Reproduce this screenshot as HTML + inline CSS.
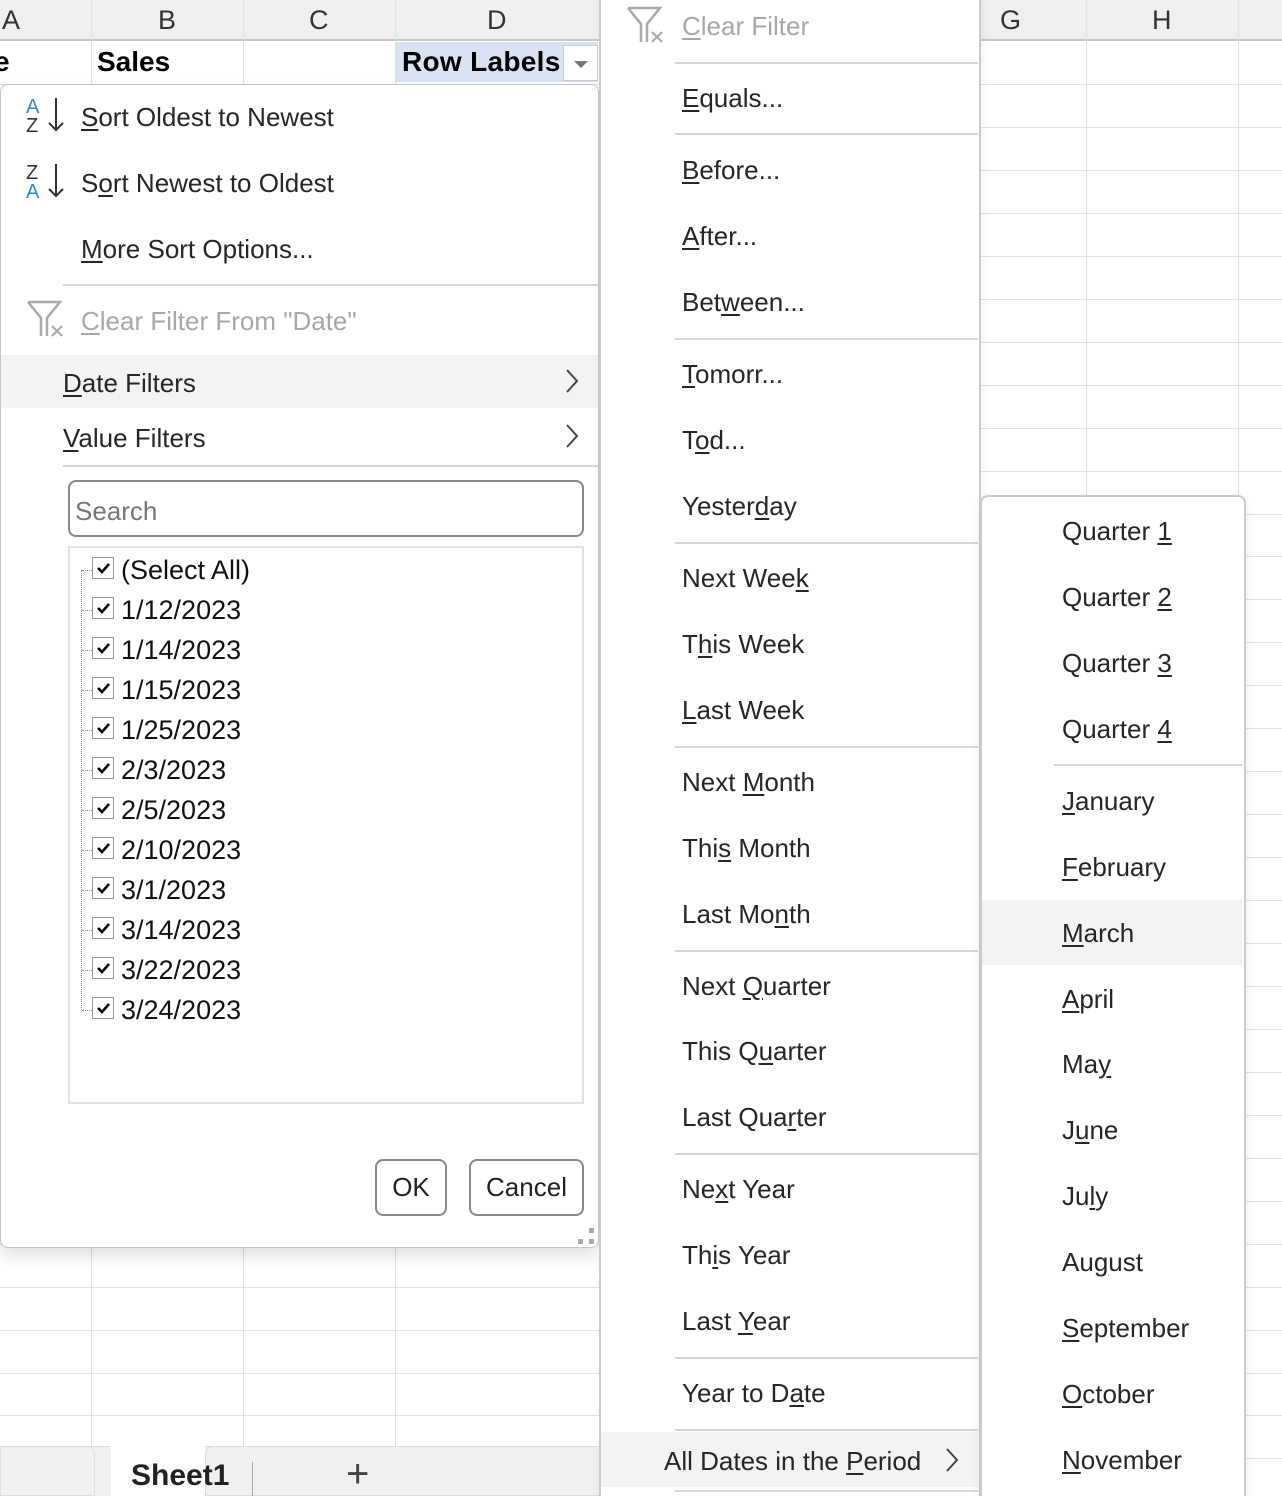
<!DOCTYPE html>
<html style="overflow:hidden;width:1282px;height:1496px"><head><meta charset="utf-8"><style>
*{margin:0;padding:0;box-sizing:border-box}
body{width:1282px;height:1496px;position:relative;overflow:hidden;background:#fff;font-family:"Segoe UI","Liberation Sans",sans-serif;color:#222;}
.a{position:absolute}
.t{position:absolute;font-size:26px;line-height:36px;height:36px;white-space:nowrap;color:#262626}
.sep{position:absolute;height:2px;background:#d6d6d6}
.vl{position:absolute;top:0;width:1px;height:1496px;background:#e1e1e1}
.hd{position:absolute;top:2px;font-size:27px;color:#333;line-height:36px}
u{text-decoration:underline;text-underline-offset:3px}
.cb{position:absolute;left:92px;width:22px;height:22px;border:1px solid #999;background:#fff}
.cb svg{position:absolute;left:4px;top:5px}
.ci{position:absolute;left:121px;font-size:27px;line-height:36px;color:#111}
</style></head><body>
<div class="a" style="left:0;top:0;width:1282px;height:41px;background:#efefef;border-bottom:2px solid #c8c8c8"></div>
<div id="grid"></div>
<div class="vl" style="left:91px"></div><div class="vl" style="left:243px"></div><div class="vl" style="left:395px"></div>
<div class="vl" style="left:1086px"></div><div class="vl" style="left:1238px"></div>
<div class="hd" style="left:2px">A</div><div class="hd" style="left:158px">B</div><div class="hd" style="left:309px">C</div><div class="hd" style="left:487px">D</div>
<div class="hd" style="left:1000px">G</div><div class="hd" style="left:1152px">H</div>
<div class="a" style="left:396px;top:42px;width:202px;height:40px;background:#dae3f3"></div>
<div class="a" style="left:-6px;top:42px;font-size:28px;font-weight:bold;line-height:40px;color:#000">e</div>
<div class="a" style="left:97px;top:42px;font-size:28px;font-weight:bold;line-height:40px;color:#000">Sales</div>
<div class="a" style="left:402px;top:42px;font-size:28px;font-weight:bold;line-height:40px;color:#000;letter-spacing:0.3px">Row Labels</div>
<div class="a" style="left:563px;top:45px;width:35px;height:36px;background:#fff;border:1px solid #ccc"></div>
<div class="a" style="left:574px;top:61px;width:0;height:0;border-left:7px solid transparent;border-right:7px solid transparent;border-top:7px solid #777"></div>

<div class="a" style="left:0;top:1446px;width:600px;height:50px;background:#f0f0f0;border-top:1px solid #ddd"></div>
<div class="a" style="left:0;top:1446px;width:95px;height:50px;background:#f0f0f0;border:1px solid #ddd;border-radius:0 8px 0 0"></div>
<div class="a" style="left:111px;top:1446px;width:94px;height:50px;background:#fff"></div>
<div class="a" style="left:205px;top:1446px;width:395px;height:50px;background:#f0f0f0;border:1px solid #ddd;border-radius:8px 0 0 0"></div>
<div class="a" style="left:131px;top:1456px;font-size:30px;font-weight:bold;color:#222;line-height:40px">Sheet1</div>
<div class="a" style="left:252px;top:1462px;width:1px;height:34px;background:#aaa"></div>
<div class="a" style="left:346px;top:1452px;font-size:40px;font-weight:200;color:#444">+</div>

<div class="a" style="left:0;top:84px;width:599px;height:1164px;background:#fff;border:1px solid #c6c6c6;border-radius:8px;box-shadow:0 8px 16px rgba(0,0,0,.12)"></div>
<svg class="a" style="left:24px;top:96px" width="44" height="40"><text x="2" y="17" font-size="20" fill="#2b88d8" font-family="Liberation Sans">A</text><text x="2" y="36" font-size="20" fill="#333" font-family="Liberation Sans">Z</text><path d="M32 2V34M25 27l7 7 7-7" stroke="#333" stroke-width="2" fill="none"/></svg>
<svg class="a" style="left:24px;top:162px" width="44" height="40"><text x="2" y="17" font-size="20" fill="#333" font-family="Liberation Sans">Z</text><text x="2" y="36" font-size="20" fill="#2b88d8" font-family="Liberation Sans">A</text><path d="M32 2V34M25 27l7 7 7-7" stroke="#333" stroke-width="2" fill="none"/></svg>
<div class="t" style="left:81px;top:99px"><u>S</u>ort Oldest to Newest</div>
<div class="t" style="left:81px;top:165px">S<u>o</u>rt Newest to Oldest</div>
<div class="t" style="left:81px;top:231px"><u>M</u>ore Sort Options...</div>
<div class="sep" style="left:63px;top:284px;width:535px"></div>
<svg class="a" style="left:26px;top:300px" width="40" height="40"><path d="M2 2H34L21 18V36M2 2L15 18V36" stroke="#aaa" stroke-width="2.5" fill="none"/><path d="M26 26l10 10M36 26l-10 10" stroke="#aaa" stroke-width="2"/></svg>
<div class="t" style="left:81px;top:303px;color:#a8a8a8"><u>C</u>lear Filter From "Date"</div>
<div class="a" style="left:1px;top:355px;width:597px;height:53px;background:#f3f3f3"></div>
<div class="t" style="left:63px;top:365px"><u>D</u>ate Filters</div>
<div class="t" style="left:63px;top:420px"><u>V</u>alue Filters</div>
<svg class="a" style="left:564px;top:368px" width="16" height="26"><path d="M3 2l10 11-10 11" stroke="#444" stroke-width="2" fill="none"/></svg>
<svg class="a" style="left:564px;top:423px" width="16" height="26"><path d="M3 2l10 11-10 11" stroke="#444" stroke-width="2" fill="none"/></svg>
<div class="sep" style="left:63px;top:465px;width:535px"></div>
<div class="a" style="left:68px;top:480px;width:516px;height:57px;border:2px solid #888;border-radius:8px"></div>
<div class="t" style="left:75px;top:493px;color:#777;font-size:26px">Search</div>
<div class="a" style="left:68px;top:546px;width:516px;height:558px;border:2px solid #e3e3e3"></div>
<div class="a" style="left:81px;top:570px;width:0;height:440px;border-left:1px dotted #888"></div>
<div id="list"></div>
<div class="a" style="left:375px;top:1159px;width:72px;height:57px;border:2px solid #888;border-radius:8px;font-size:26px;line-height:53px;text-align:center">OK</div>
<div class="a" style="left:469px;top:1159px;width:115px;height:57px;border:2px solid #888;border-radius:8px;font-size:26px;line-height:53px;text-align:center">Cancel</div>
<div class="a" style="left:589px;top:1228px;width:5px;height:5px;background:#aaa"></div>
<div class="a" style="left:578px;top:1239px;width:5px;height:5px;background:#aaa"></div>
<div class="a" style="left:589px;top:1239px;width:5px;height:5px;background:#aaa"></div>

<div class="a" style="left:599px;top:0;width:382px;height:1496px;background:#fff;border-left:2px solid #ccc;border-right:2px solid #ccc;box-shadow:2px 0 8px rgba(0,0,0,.06)"></div>
<svg class="a" style="left:626px;top:6px" width="40" height="40"><path d="M2 2H34L21 18V36M2 2L15 18V36" stroke="#aaa" stroke-width="2.5" fill="none"/><path d="M26 26l10 10M36 26l-10 10" stroke="#aaa" stroke-width="2"/></svg>
<div class="a" style="left:601px;top:1432px;width:377px;height:55px;background:#f3f3f3"></div>
<div id="m2"></div>
<svg class="a" style="left:944px;top:1447px" width="16" height="26"><path d="M3 2l10 11-10 11" stroke="#444" stroke-width="2" fill="none"/></svg>

<div class="a" style="left:980px;top:495px;width:266px;height:1001px;background:#fff;border:2px solid #ccc;border-bottom:none;border-radius:8px 8px 0 0;box-shadow:0 4px 10px rgba(0,0,0,.08)"></div>
<div class="a" style="left:982px;top:900px;width:260px;height:65px;background:#f3f3f3"></div>
<div class="sep" style="left:1054px;top:764px;width:188px"></div>
<div id="m3"></div>

<script>
var g='';for(var y=84;y<1496;y+=42.95){g+='<div class="a" style="left:0;top:'+Math.round(y)+'px;width:1282px;height:1px;background:#e1e1e1"></div>';}
document.getElementById('grid').innerHTML=g;
var L=['(Select All)','1/12/2023','1/14/2023','1/15/2023','1/25/2023','2/3/2023','2/5/2023','2/10/2023','3/1/2023','3/14/2023','3/22/2023','3/24/2023'];
var h='';L.forEach(function(s,i){var c=570+i*40;h+='<div class="a" style="left:82px;top:'+c+'px;width:10px;border-top:1px dotted #888"></div><div class="cb" style="top:'+(c-13)+'px"><svg width="13" height="11"><path d="M1 5l4 4 7-8" stroke="#000" stroke-width="2.6" fill="none"/></svg></div><div class="ci" style="top:'+(c-18)+'px">'+s+'</div>';});
document.getElementById('list').innerHTML=h;
var M=[[26,'<u>C</u>lear Filter',1],[98,'<u>E</u>quals...'],[170,'<u>B</u>efore...'],[236,'<u>A</u>fter...'],[302,'Bet<u>w</u>een...'],[374,'<u>T</u>omorr...'],[440,'T<u>o</u>d...'],[506,'Yester<u>d</u>ay'],[578,'Next Wee<u>k</u>'],[644,'T<u>h</u>is Week'],[710,'<u>L</u>ast Week'],[782,'Next <u>M</u>onth'],[848,'Thi<u>s</u> Month'],[914,'Last Mo<u>n</u>th'],[986,'Next <u>Q</u>uarter'],[1051,'This Q<u>u</u>arter'],[1117,'Last Qua<u>r</u>ter'],[1189,'Ne<u>x</u>t Year'],[1255,'Th<u>i</u>s Year'],[1321,'Last <u>Y</u>ear'],[1393,'Year to D<u>a</u>te'],[1461,'All Dates in the <u>P</u>eriod',2]];
var s='';M.forEach(function(m){s+='<div class="t" style="left:'+(m[2]==2?664:682)+'px;top:'+(m[0]-18)+'px;'+(m[2]==1?'color:#a8a8a8':'')+'">'+m[1]+'</div>';});
[62,133,338,542,746,950,1153,1357,1429,1490].forEach(function(y){s+='<div class="sep" style="left:675px;top:'+y+'px;width:303px"></div>';});
document.getElementById('m2').innerHTML=s;
var Q=[[531,'Quarter <u>1</u>'],[597,'Quarter <u>2</u>'],[663,'Quarter <u>3</u>'],[729,'Quarter <u>4</u>'],[801,'<u>J</u>anuary'],[867,'<u>F</u>ebruary'],[933,'<u>M</u>arch'],[999,'<u>A</u>pril'],[1064,'Ma<u>y</u>'],[1130,'J<u>u</u>ne'],[1196,'Ju<u>l</u>y'],[1262,'Au<u>g</u>ust'],[1328,'<u>S</u>eptember'],[1394,'<u>O</u>ctober'],[1460,'<u>N</u>ovember']];
var q='';Q.forEach(function(m){q+='<div class="t" style="left:1062px;top:'+(m[0]-18)+'px">'+m[1]+'</div>';});
document.getElementById('m3').innerHTML=q;
</script>
</body></html>
